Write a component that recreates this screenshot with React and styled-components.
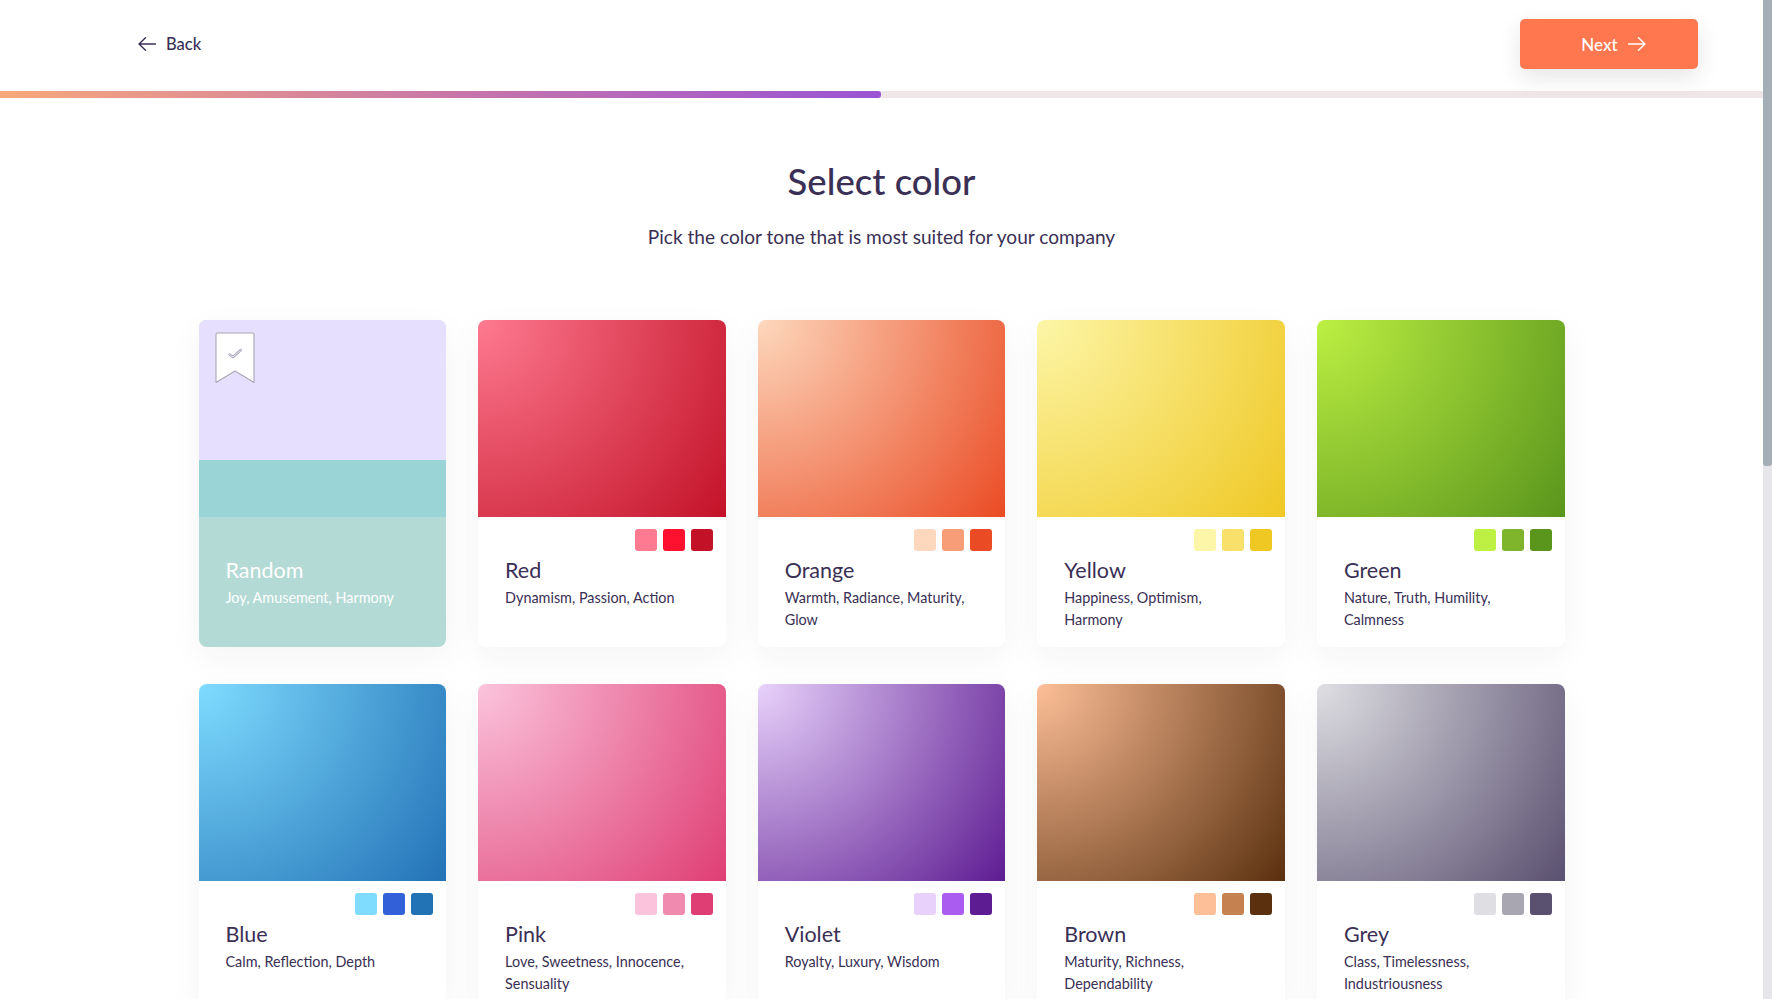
import React from 'react';
import styled, { createGlobalStyle } from 'styled-components';

const ink = '#3a2f55';

const colors = [
  { name: 'Red', desc: 'Dynamism, Passion, Action', swatches: ['#fe7a90', '#fe112f', '#c31228'] },
  { name: 'Orange', desc: 'Warmth, Radiance, Maturity, Glow', swatches: ['#fdd8bd', '#f79d78', '#ea4b24'] },
  { name: 'Yellow', desc: 'Happiness, Optimism, Harmony', swatches: ['#fdf6a8', '#f8e06a', '#efc824'] },
  { name: 'Green', desc: 'Nature, Truth, Humility, Calmness', swatches: ['#bdf042', '#7fb52d', '#5a951c'] },
  { name: 'Blue', desc: 'Calm, Reflection, Depth', swatches: ['#7fdcff', '#3160d8', '#2272b6'] },
  { name: 'Pink', desc: 'Love, Sweetness, Innocence, Sensuality', swatches: ['#fbc4dc', '#f08aae', '#df3e74'] },
  { name: 'Violet', desc: 'Royalty, Luxury, Wisdom', swatches: ['#e8d2fb', '#aa5bf0', '#5e1c92'] },
  { name: 'Brown', desc: 'Maturity, Richness, Dependability', swatches: ['#fdbf98', '#c58150', '#5b300e'] },
  { name: 'Grey', desc: 'Class, Timelessness, Industriousness', swatches: ['#dfdfe3', '#a8a7b1', '#5a5070'] },
];

const Arrow = ({ left }) => (
  <ArrowIcon viewBox="0 0 18 14" $left={left}>
    <path
      d="M0.5 7h16.5M10.5 0.8L17 7l-6.5 6.2"
      fill="none"
      stroke="currentColor"
      strokeWidth="1.4"
      strokeLinecap="round"
      strokeLinejoin="round"
    />
  </ArrowIcon>
);

const App = () => (
  <Shell>
    <GlobalStyle />
    <Main>
      <TopBar>
        <BackLink>
          <Arrow left />
          Back
        </BackLink>
        <NextButton>
          Next
          <Arrow />
        </NextButton>
      </TopBar>
      <Progress>
        <ProgressFill />
      </Progress>
      <Heading>
        <Title>Select color</Title>
        <Subtitle>Pick the color tone that is most suited for your company</Subtitle>
      </Heading>
      <Grid>
        <RandomCard>
          <RandomTop>
            <Bookmark viewBox="0 0 40 53">
              <path
                d="M1 2.5A1.5 1.5 0 0 1 2.5 1h35A1.5 1.5 0 0 1 39 2.5v48L20 39 1 50.5z"
                fill="#fff"
                stroke="#a9a6b4"
                strokeWidth="1.1"
                strokeLinejoin="round"
              />
              <path
                d="M14.5 22.5l3.5 2.5 7.8-7"
                fill="none"
                stroke="#a9a3b8"
                strokeWidth="2.4"
                strokeLinecap="round"
                strokeLinejoin="round"
              />
              <path
                d="M14.5 22.5l3.5 2.5 7.8-7"
                fill="none"
                stroke="#f1eef5"
                strokeWidth="0.9"
                strokeLinecap="round"
                strokeLinejoin="round"
              />
            </Bookmark>
          </RandomTop>
          <RandomBand />
          <CardBody>
            <CardName $light>Random</CardName>
            <CardDesc $light>Joy, Amusement, Harmony</CardDesc>
          </CardBody>
        </RandomCard>
        {colors.map((c) => (
          <Card key={c.name}>
            <Gradient $from={c.swatches[0]} $to={c.swatches[2]} />
            <Swatches>
              {c.swatches.map((s) => (
                <Swatch key={s} $color={s} />
              ))}
            </Swatches>
            <CardBody>
              <CardName>{c.name}</CardName>
              <CardDesc>{c.desc}</CardDesc>
            </CardBody>
          </Card>
        ))}
      </Grid>
    </Main>
    <ScrollTrack>
      <ScrollThumb />
    </ScrollTrack>
  </Shell>
);

export default App;

// Styled Components

const GlobalStyle = createGlobalStyle`
  html, body {
    margin: 0;
    height: 100%;
    overflow: hidden;
  }

  body {
    background: #fff;
    color: ${ink};
    font-family: 'Lato', 'Open Sans', sans-serif;
  }
`;

const Shell = styled.div`
  display: flex;
  height: 100vh;
  overflow: hidden;
`;

const Main = styled.main`
  flex: 1;
  min-width: 0;
`;

const ScrollTrack = styled.div`
  flex: none;
  width: 9px;
  background: #e6e6ea;
`;

const ScrollThumb = styled.div`
  height: 466px;
  border-radius: 0 0 3px 3px;
  background: #a4aeb6;
`;

const TopBar = styled.header`
  display: flex;
  justify-content: space-between;
  align-items: center;
  height: 91px;
  padding: 0 65px 3px 138px;
  box-sizing: border-box;
`;

const ArrowIcon = styled.svg`
  flex: none;
  width: 18px;
  height: 14px;
  transform: ${(p) => (p.$left ? 'scaleX(-1)' : 'none')};
`;

const BackLink = styled.a`
  display: flex;
  align-items: center;
  gap: 10px;
  font-size: 16.5px;
  font-weight: 500;
  color: ${ink};
`;

const NextButton = styled.button`
  display: flex;
  align-items: center;
  justify-content: center;
  gap: 10px;
  width: 178px;
  height: 50px;
  padding: 0 0 0 9px;
  border: 0;
  border-radius: 5px;
  background: #ff774f;
  color: #fff;
  font-family: inherit;
  font-size: 17px;
  font-weight: 500;
  box-shadow: 0 8px 22px rgba(60, 40, 50, 0.12);
`;

const Progress = styled.div`
  height: 7px;
  background: #efe6e8;
`;

const ProgressFill = styled.div`
  width: 881px;
  height: 100%;
  border-radius: 0 3px 3px 0;
  background: linear-gradient(90deg, #f7a87a 0%, #c573ac 55%, #9a54d4 100%);
`;

const Heading = styled.div`
  padding-top: 58px;
  text-align: center;
`;

const Title = styled.h1`
  margin: 0;
  font-size: 36.5px;
  line-height: 50px;
  font-weight: 500;
  color: ${ink};
`;

const Subtitle = styled.p`
  margin: 0;
  padding-top: 18px;
  font-size: 19.1px;
  line-height: 26px;
  color: ${ink};
`;

const Grid = styled.div`
  display: grid;
  grid-template-columns: repeat(5, 1fr);
  gap: 37px 32px;
  width: 1366px;
  margin: 70px auto 0;
`;

const Card = styled.article`
  height: 327px;
  border-radius: 8px;
  background: #fff;
  overflow: hidden;
  box-shadow: 0 10px 34px rgba(40, 30, 60, 0.05);
`;

const RandomCard = styled(Card)`
  background: #b3dad4;
`;

const RandomTop = styled.div`
  height: 140px;
  padding: 12px 15px 0 16px;
  box-sizing: border-box;
  background: #e7dffe;
`;

const RandomBand = styled.div`
  height: 57px;
  background: #9ad4d6;
`;

const Bookmark = styled.svg`
  display: block;
  width: 40px;
  height: 53px;
`;

const Gradient = styled.div`
  height: 197px;
  background: radial-gradient(circle at 0 0, ${(p) => p.$from}, ${(p) => p.$to});
`;

const Swatches = styled.div`
  display: flex;
  justify-content: flex-end;
  gap: 6px;
  padding: 12px 13px 0;
`;

const Swatch = styled.span`
  width: 22px;
  height: 22px;
  border-radius: 3px;
  background: ${(p) => p.$color};
`;

const CardBody = styled.div`
  padding: 0 24px 0 27px;

  ${RandomCard} & {
    padding-top: 34px;
  }
`;

const CardName = styled.h2`
  margin: 0;
  padding-top: 4px;
  font-size: 21.5px;
  line-height: 30px;
  font-weight: 400;
  color: ${(p) => (p.$light ? '#fff' : ink)};
`;

const CardDesc = styled.p`
  margin: 0;
  padding-top: 2px;
  font-size: 14.4px;
  line-height: 22px;
  color: ${(p) => (p.$light ? '#fff' : ink)};
`;
